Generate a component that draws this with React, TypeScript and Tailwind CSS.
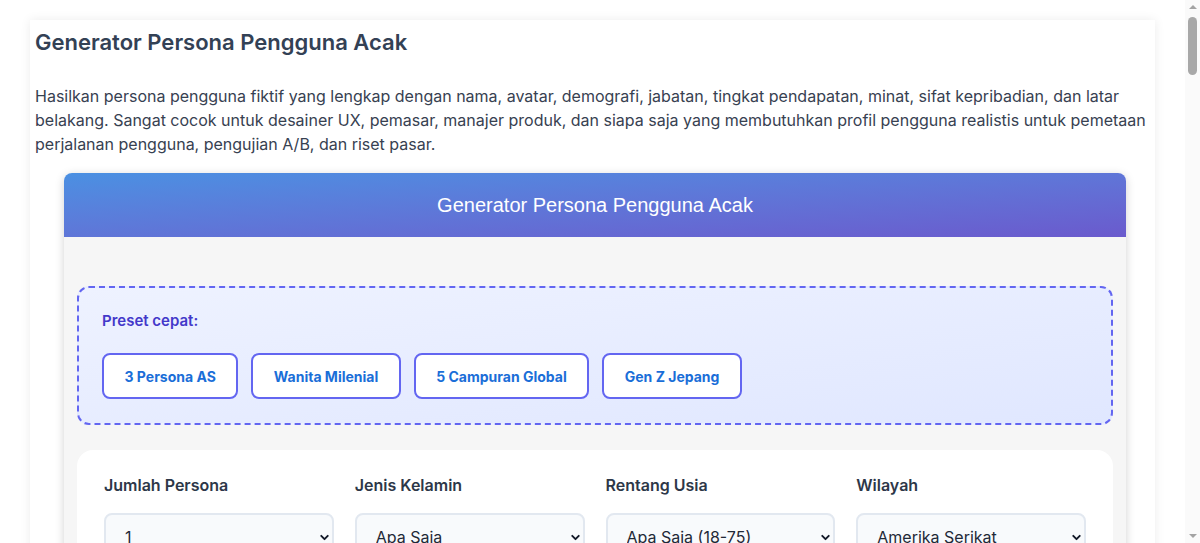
import React from "react";
import { ChevronDown } from "lucide-react";

const presets = ["3 Persona AS", "Wanita Milenial", "5 Campuran Global", "Gen Z Jepang"];

const fields = [
  { label: "Jumlah Persona", options: ["1", "2", "3", "5", "10"] },
  { label: "Jenis Kelamin", options: ["Apa Saja", "Pria", "Wanita"] },
  { label: "Rentang Usia", options: ["Apa Saja (18-75)", "18-24", "25-34", "35-44", "45-60"] },
  { label: "Wilayah", options: ["Amerika Serikat", "Eropa", "Asia", "Global"] },
];

const SelectField = ({ label, options }: { label: string; options: string[] }) => (
  <div className="flex flex-col">
    <label className="text-[16px] leading-[24px] font-semibold text-[#2d3748]">{label}</label>
    <div className="relative mt-[16px]">
      <select className="w-full h-[48px] appearance-none rounded-lg border-2 border-[#e2e8f0] bg-[#f8fafc] pl-[19px] pr-[24px] text-[16px] text-[#1f2937] outline-none">
        {options.map((o) => (
          <option key={o}>{o}</option>
        ))}
      </select>
      <ChevronDown
        size={13}
        strokeWidth={3.5}
        className="pointer-events-none absolute right-[3px] top-[18px] text-[#111827]"
      />
    </div>
  </div>
);

// browser-style vertical scrollbar pinned to the window edge
const ScrollBar = () => (
  <div className="fixed right-0 top-0 bottom-0 flex w-[15px] flex-col items-center bg-[#fafafa]">
    <div className="mt-[5px] h-0 w-0 border-x-[4px] border-b-[4px] border-x-transparent border-b-[#a3a3a3]" />
    <div className="mt-[8px] h-[58px] w-[9px] rounded-full bg-[#a8a8a8]" />
    <div className="mt-auto mb-[5px] h-0 w-0 border-x-[4px] border-t-[4px] border-x-transparent border-t-[#a3a3a3]" />
  </div>
);

export default function App() {
  return (
    <div className="min-h-screen bg-white pl-[30px] pr-[45px] pt-[20px] pb-[40px] font-['Inter',sans-serif]">
      <div className="bg-white px-[5px] pt-[8px] pb-[40px] shadow-[0_0_10px_rgba(0,0,0,0.08)]">
        <h1 className="text-[22px] leading-[28px] font-semibold text-[#334155]">
          Generator Persona Pengguna Acak
        </h1>
        <p className="mt-[28px] text-[16px] leading-[24px] text-[#374151]">
          Hasilkan persona pengguna fiktif yang lengkap dengan nama, avatar, demografi, jabatan, tingkat
          pendapatan, minat, sifat kepribadian, dan latar belakang. Sangat cocok untuk desainer UX, pemasar,
          manajer produk, dan siapa saja yang membutuhkan profil pengguna realistis untuk pemetaan perjalanan
          pengguna, pengujian A/B, dan riset pasar.
        </p>

        <div className="mt-[17px] ml-[29px] mr-[24px] overflow-hidden rounded-lg shadow-[0_2px_10px_rgba(0,0,0,0.18)]">
          <div className="flex h-[64px] items-center justify-center bg-gradient-to-br from-[#4a90e2] to-[#6a5acd]">
            <span className="font-['Liberation_Sans',Arial,sans-serif] text-[20px] text-white">
              Generator Persona Pengguna Acak
            </span>
          </div>

          <div className="bg-[#f6f6f6] px-[13px] pt-[49px] pb-[40px]">
            <div className="rounded-xl border-2 border-dashed border-[#6366f1] bg-gradient-to-br from-[#eef2ff] to-[#e0e7ff] pl-[23px] pr-[23px] pt-[23px] pb-[24px]">
              <div className="text-[15px] leading-[20px] font-semibold text-[#4338ca]">Preset cepat:</div>
              <div className="mt-[22px] flex flex-wrap gap-[13px]">
                {presets.map((p) => (
                  <button
                    key={p}
                    className="h-[46px] rounded-lg border-2 border-[#6366f1] bg-white px-[20.5px] text-[14px] font-bold text-[#1a6ed8]"
                  >
                    {p}
                  </button>
                ))}
              </div>
            </div>

            <div className="mt-[25px] rounded-2xl bg-white px-[27px] pt-[23px] pb-[28px]">
              <div className="grid grid-cols-4 gap-[21px]">
                {fields.map((f) => (
                  <SelectField key={f.label} label={f.label} options={f.options} />
                ))}
              </div>
              <div className="mt-[28px] grid grid-cols-4 gap-[21px]">
                <SelectField label="Tingkat Pendapatan" options={["Apa Saja", "Rendah", "Menengah", "Tinggi"]} />
                <SelectField label="Industri" options={["Apa Saja", "Teknologi", "Kesehatan", "Pendidikan"]} />
                <SelectField label="Tingkat Teknologi" options={["Apa Saja", "Pemula", "Menengah", "Ahli"]} />
                <SelectField label="Format" options={["Kartu", "JSON", "Teks"]} />
              </div>
              <button className="mt-[28px] h-[50px] w-full rounded-lg bg-gradient-to-br from-[#4a90e2] to-[#6a5acd] text-[16px] font-semibold text-white">
                Buat Persona
              </button>
            </div>

            <div className="mt-[25px] h-[3600px] rounded-2xl bg-white" />
          </div>
        </div>
      </div>
      <ScrollBar />
    </div>
  );
}
